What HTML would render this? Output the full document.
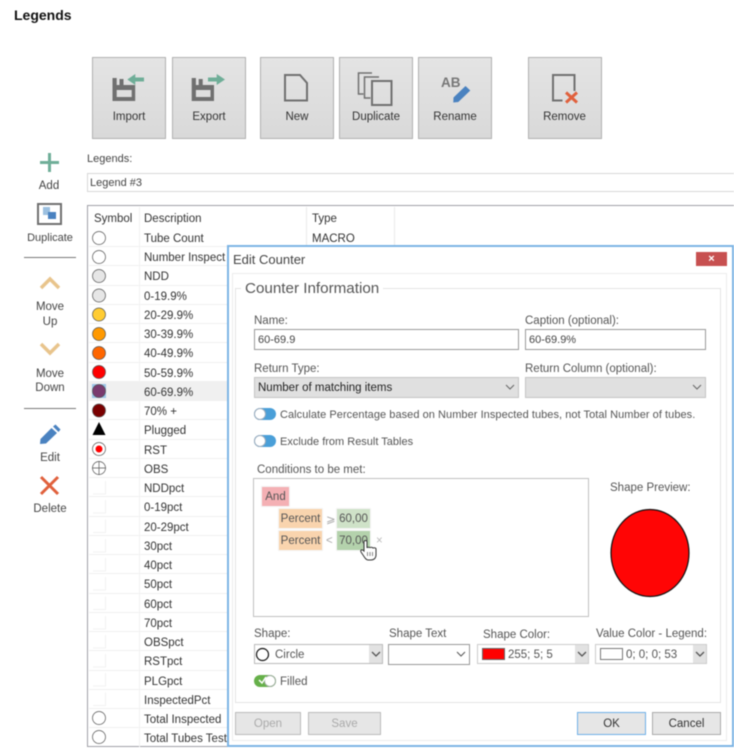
<!DOCTYPE html>
<html><head><meta charset="utf-8">
<style>
html,body{margin:0;padding:0;background:#fff}
#p{position:relative;width:734px;height:748px;overflow:hidden;background:#fff;font-family:"Liberation Sans",sans-serif;font-size:11.5px;color:#444;filter:blur(.4px)}
#p div,#p svg{position:absolute}
.t{white-space:nowrap;line-height:14px;height:14px}
.c{text-align:center;transform:translateX(-50%)}
.btn{top:57px;width:74px;height:82px;box-sizing:border-box;border:1px solid #b0b0b0;background:linear-gradient(#e4e4e4,#d9d9d9)}
.btn .l{position:absolute;left:0;right:0;top:52px;text-align:center;color:#333;font-size:11.5px;line-height:14px}
.btn svg{left:-1px;top:-1px}
.row{left:89px;width:138px;height:19px;border-bottom:1px solid #f0f0f0;box-sizing:border-box}
.lbl{color:#555}
.input{box-sizing:border-box;border:1.500px solid #9a9a9a;background:#fff;height:21px;line-height:20px;padding-left:3px;font-size:11px;color:#444}
.sel{box-sizing:border-box;background:#e0e0e0;border:1px solid #c4c4c4;height:21px;line-height:21px}
.chip{box-sizing:border-box;height:21px;line-height:21px;text-align:center;font-size:11.5px;color:#555;border:1px solid #f4f4f4}
.tog{width:22px;height:12px;border-radius:6px;background:#4a9fd8;box-sizing:border-box}
.tog i{position:absolute;left:0;top:0;width:12px;height:12px;border-radius:50%;background:#fff;border:1px solid #9ab;box-sizing:border-box}
.pb{box-sizing:border-box;border:1px solid #bbb;background:#e6e6e6;height:23px;line-height:22px;text-align:center;top:712px}
</style></head><body>
<div id="p">
<div class="t" style="left:14px;top:8px;font-size:14px;font-weight:bold;color:#111">Legends</div>

<div class="btn" style="left:92px"><div class="l">Import</div>
<svg width="74" height="82" viewBox="92 57 74 82"><path d="M112.500 78h4.200v7h2.800v-6h4v6h11.700v16h-22.700z M116.700 90v7h15v-7z" fill="#707070" fill-rule="evenodd"/><path d="M127.300 79.500l8-5.500v3.500h8.700v4h-8.700v3.500z" fill="#6fae98"/></svg></div>
<div class="btn" style="left:172px"><div class="l">Export</div>
<svg width="74" height="82" viewBox="172 57 74 82"><path d="M191.700 78h4.200v7h2.800v-6h4v6h11.300v16h-22.300z M195.900 90v7h14.600v-7z" fill="#707070" fill-rule="evenodd"/><path d="M208 77.500h8.700V74l8.300 5.500-8.300 5.500v-3.500H208z" fill="#6fae98"/></svg></div>
<div class="btn" style="left:260px"><div class="l">New</div>
<svg width="74" height="82" viewBox="260 57 74 82"><path d="M285 75h15l7 8v17.500h-22z" fill="none" stroke="#707070" stroke-width="2"/></svg></div>
<div class="btn" style="left:339px"><div class="l">Duplicate</div>
<svg width="74" height="82" viewBox="339 57 74 82"><path d="M372 73h-13.500v21h5" fill="none" stroke="#707070" stroke-width="1.500"/><path d="M379 77h-14.500v21h6" fill="none" stroke="#707070" stroke-width="1.500"/><rect x="372" y="81" width="19.500" height="24" fill="none" stroke="#707070" stroke-width="2"/></svg></div>
<div class="btn" style="left:418px"><div class="l">Rename</div>
<div class="t" style="left:22px;top:18px;font-weight:bold;font-size:13.5px;color:#777">AB</div>
<svg width="74" height="82" viewBox="418 57 74 82"><path d="M453.500 97.500L465.500 86l4.800 4.500-12 11.500-5 .5z" fill="#4a82c0"/></svg></div>
<div class="btn" style="left:527.500px"><div class="l">Remove</div>
<svg width="74" height="82" viewBox="527.500 57 74 82"><path d="M562 100.500h-9.500V75h21.500v16" fill="none" stroke="#707070" stroke-width="2"/><path d="M565.500 92.500l11 10M576.500 92.500l-11 10" stroke="#e0603c" stroke-width="3"/></svg></div>

<svg style="left:38px;top:151px" width="23" height="23" viewBox="0 0 23 23"><path d="M11.500 2v19M2 11.500h19" stroke="#6fae98" stroke-width="3"/></svg>
<div class="t c" style="left:49px;top:179px">Add</div>
<svg style="left:36px;top:202px" width="27" height="24" viewBox="0 0 27 24"><rect x="2" y="2" width="23" height="20" fill="#fff" stroke="#707070" stroke-width="2"/><rect x="7" y="5" width="7" height="8" fill="#9cc0e0"/><rect x="12" y="10" width="8" height="7" fill="#4a82c0"/></svg>
<div class="t c" style="left:50px;top:231px;font-size:11px">Duplicate</div>
<div style="left:24px;top:257px;width:52px;height:1px;background:#777"></div>
<svg style="left:38px;top:275px" width="24" height="16" viewBox="0 0 24 16"><path d="M3 13L12 4l9 9" fill="none" stroke="#e8c48c" stroke-width="3.500"/></svg>
<div class="t c" style="left:50px;top:300px">Move</div>
<div class="t c" style="left:50px;top:315px">Up</div>
<svg style="left:38px;top:341px" width="24" height="16" viewBox="0 0 24 16"><path d="M3 3l9 9 9-9" fill="none" stroke="#e8c48c" stroke-width="3.500"/></svg>
<div class="t c" style="left:50px;top:367px">Move</div>
<div class="t c" style="left:50px;top:381px">Down</div>
<div style="left:24px;top:408px;width:52px;height:1px;background:#777"></div>
<svg style="left:38px;top:423px" width="23" height="22" viewBox="0 0 23 22"><path d="M2.500 16L13.500 5l5.500 5L8 20.500l-6 .5z" fill="#4a82c0"/><path d="M15 3.500l2.500-2 5 5-2 2.500z" fill="#4a82c0"/></svg>
<div class="t c" style="left:50px;top:451px">Edit</div>
<svg style="left:38px;top:474px" width="23" height="23" viewBox="0 0 23 23"><path d="M3 3l17 17M20 3L3 20" stroke="#e0603c" stroke-width="3"/></svg>
<div class="t c" style="left:50px;top:502px">Delete</div>

<div class="t" style="left:87px;top:152px;font-size:11px">Legends:</div>
<div style="left:87px;top:173px;width:660px;height:19px;box-sizing:border-box;border:1.500px solid #d8d8d8;line-height:18px;padding-left:2px;font-size:11px">Legend #3</div>

<div style="left:87px;top:205px;width:660px;height:542px;box-sizing:border-box;border:1px solid #a0a0a8;border-right:0;border-width:1.500px 0 1.500px 1.500px"></div>
<div style="left:139px;top:207px;width:1px;height:540px;background:#f2f2f2"></div>
<div style="left:306px;top:207px;width:1px;height:38px;background:#eaeaea"></div>
<div style="left:394px;top:207px;width:1px;height:38px;background:#eaeaea"></div>
<div class="t" style="left:94px;top:212px;color:#333">Symbol</div>
<div class="t" style="left:144px;top:212px;color:#333">Description</div>
<div class="t" style="left:312px;top:212px;color:#333">Type</div>
<div class="t" style="left:312px;top:232px;color:#333">MACRO</div>

<div class="row" style="top:228px"></div><div class="row" style="top:247px"></div><div class="row" style="top:267px"></div><div class="row" style="top:286px"></div><div class="row" style="top:305px"></div><div class="row" style="top:324px"></div><div class="row" style="top:344px"></div><div class="row" style="top:363px"></div>
<div style="left:89px;top:382px;width:138px;height:19px;background:#f0f0f0"></div>
<div class="row" style="top:401px"></div><div class="row" style="top:421px"></div><div class="row" style="top:440px"></div><div class="row" style="top:459px"></div><div class="row" style="top:478px"></div><div class="row" style="top:498px"></div><div class="row" style="top:517px"></div><div class="row" style="top:536px"></div><div class="row" style="top:555px"></div><div class="row" style="top:575px"></div><div class="row" style="top:594px"></div><div class="row" style="top:613px"></div><div class="row" style="top:632px"></div><div class="row" style="top:652px"></div><div class="row" style="top:671px"></div><div class="row" style="top:690px"></div><div class="row" style="top:709px"></div>

<div class="t" style="left:144px;top:232px;color:#333">Tube Count</div>
<div class="t" style="left:144px;top:251px;color:#333">Number Inspect</div>
<div class="t" style="left:144px;top:270px;color:#333">NDD</div>
<div class="t" style="left:144px;top:290px;color:#333">0-19.9%</div>
<div class="t" style="left:144px;top:309px;color:#333">20-29.9%</div>
<div class="t" style="left:144px;top:328px;color:#333">30-39.9%</div>
<div class="t" style="left:144px;top:347px;color:#333">40-49.9%</div>
<div class="t" style="left:144px;top:367px;color:#333">50-59.9%</div>
<div class="t" style="left:144px;top:386px;color:#333">60-69.9%</div>
<div class="t" style="left:144px;top:405px;color:#333">70% +</div>
<div class="t" style="left:144px;top:424px;color:#333">Plugged</div>
<div class="t" style="left:144px;top:444px;color:#333">RST</div>
<div class="t" style="left:144px;top:463px;color:#333">OBS</div>
<div class="t" style="left:144px;top:482px;color:#333">NDDpct</div>
<div class="t" style="left:144px;top:501px;color:#333">0-19pct</div>
<div class="t" style="left:144px;top:521px;color:#333">20-29pct</div>
<div class="t" style="left:144px;top:540px;color:#333">30pct</div>
<div class="t" style="left:144px;top:559px;color:#333">40pct</div>
<div class="t" style="left:144px;top:578px;color:#333">50pct</div>
<div class="t" style="left:144px;top:598px;color:#333">60pct</div>
<div class="t" style="left:144px;top:617px;color:#333">70pct</div>
<div class="t" style="left:144px;top:636px;color:#333">OBSpct</div>
<div class="t" style="left:144px;top:655px;color:#333">RSTpct</div>
<div class="t" style="left:144px;top:675px;color:#333">PLGpct</div>
<div class="t" style="left:144px;top:694px;color:#333">InspectedPct</div>
<div class="t" style="left:144px;top:713px;color:#333">Total Inspected</div>
<div class="t" style="left:144px;top:732px;color:#333">Total Tubes Test</div>

<svg style="left:88px;top:228px" width="24" height="519" viewBox="0 0 24 519">
<g stroke="#555" stroke-width=".7">
<circle cx="11" cy="10" r="6.500" fill="#fff"/>
<circle cx="11" cy="29" r="6.500" fill="#fff"/>
<circle cx="11" cy="48" r="6.500" fill="#e6e6e6"/>
<circle cx="11" cy="67.500" r="6.500" fill="#e6e6e6"/>
<circle cx="11" cy="86.500" r="6.500" fill="#ffcc33"/>
<circle cx="11" cy="106" r="6.500" fill="#ff9900"/>
<circle cx="11" cy="125" r="6.500" fill="#ff6600"/>
<circle cx="11" cy="144" r="6.500" fill="#ff0000"/>
<rect x="4" y="156" width="14" height="14" fill="#9cc4e8" stroke="none"/>
<circle cx="11" cy="163" r="6.500" fill="#7a3a6e"/>
<circle cx="11" cy="182.500" r="6.500" fill="#7a0000"/>
<path d="M11 194l6.500 13h-13z" fill="#000" stroke="none"/>
<circle cx="11" cy="221" r="6.500" fill="#fff"/><circle cx="11" cy="221" r="3.500" fill="#f00" stroke="none"/>
<circle cx="11" cy="240" r="6.500" fill="#fff"/><path d="M11 233v14M4 240h14" fill="none"/>
<circle cx="11" cy="490" r="6.500" fill="#fff"/>
<circle cx="11" cy="509" r="6.500" fill="#fff"/>
</g>
<g fill="none" stroke="#f2f2f2" stroke-width="1">
<path d="M17.500 253v13H5"/><path d="M17.500 272v13H5"/><path d="M17.500 291.500v13H5"/><path d="M17.500 311v13H5"/><path d="M17.500 330v13H5"/><path d="M17.500 349v13H5"/><path d="M17.500 368.500v13H5"/><path d="M17.500 388v13H5"/><path d="M17.500 407v13H5"/><path d="M17.500 426v13H5"/><path d="M17.500 445v13H5"/><path d="M17.500 464.500v13H5"/>
</g></svg>

<div style="left:227px;top:245px;width:507px;height:502px;box-sizing:border-box;border:2px solid #7cb4e4;background:#fff"></div>
<div class="t" style="left:233px;top:253px;font-size:13px;color:#444">Edit Counter</div>
<div style="left:696px;top:252px;width:31px;height:14px;background:#c75050;color:#fff;text-align:center;font-size:11px;line-height:14px;font-weight:bold">×</div>
<div style="left:232px;top:273px;width:495px;height:468px;box-sizing:border-box;border:1px solid #ececec"></div>
<div style="left:235px;top:288px;width:486px;height:415px;box-sizing:border-box;border:1px solid #e4e4e4"></div>
<div class="t" style="left:241px;top:280px;height:18px;line-height:18px;font-size:15.200px;color:#555;background:#fff;padding:0 4px">Counter Information</div>

<div class="t lbl" style="left:254px;top:314px">Name:</div>
<div class="t lbl" style="left:525px;top:314px">Caption (optional):</div>
<div class="input" style="left:254px;top:329px;width:265px">60-69.9</div>
<div class="input" style="left:525px;top:329px;width:181px">60-69.9%</div>
<div class="t lbl" style="left:254px;top:362px">Return Type:</div>
<div class="t lbl" style="left:525px;top:362px">Return Column (optional):</div>
<div class="sel" style="left:254px;top:377px;width:265px;padding-left:3px;color:#222">Number of matching items</div>
<div class="sel" style="left:525px;top:377px;width:181px"></div>
<svg style="left:505px;top:384px" width="10" height="7" viewBox="0 0 10 7"><path d="M1 1l4 4 4-4" fill="none" stroke="#666" stroke-width="1"/></svg>
<svg style="left:692px;top:384px" width="10" height="7" viewBox="0 0 10 7"><path d="M1 1l4 4 4-4" fill="none" stroke="#666" stroke-width="1"/></svg>
<div class="tog" style="left:254px;top:408px"><i></i></div>
<div class="t lbl" style="left:280px;top:408px;font-size:11px;letter-spacing:.05px">Calculate Percentage based on Number Inspected tubes, not Total Number of tubes.</div>
<div class="tog" style="left:254px;top:435px"><i></i></div>
<div class="t lbl" style="left:280px;top:435px;font-size:11px">Exclude from Result Tables</div>

<div class="t lbl" style="left:257px;top:463px">Conditions to be met:</div>
<div style="left:253px;top:478px;width:336px;height:139px;box-sizing:border-box;border:1px solid #c0c0c0"></div>
<div class="chip" style="left:261px;top:486px;width:29px;background:#f4b0b4">And</div>
<div class="chip" style="left:278px;top:508px;width:45px;background:#f9d4ae">Percent</div>
<div class="t" style="left:326px;top:513px;color:#aaa">⩾</div>
<div class="chip" style="left:336px;top:508px;width:35px;background:#cfe2c8">60,00</div>
<div class="chip" style="left:278px;top:530px;width:45px;background:#f9d4ae">Percent</div>
<div class="t" style="left:326px;top:534px;color:#aaa">&lt;</div>
<div class="chip" style="left:336px;top:530px;width:35px;background:#b4d2ac">70,00</div>
<div class="t" style="left:376px;top:534px;color:#bbb">×</div>
<svg style="left:359px;top:539px" width="18" height="23" viewBox="0 0 18 23"><path d="M5 12V3c0-2 3-2 3 0v6c0-1 3-1 3 0 0-1 3-1 3 .5 0-1 3-1 3 .5v6c0 3-2 5-5 5H9c-2 0-3-2-5-5l-2-3c-1-2 1-3 3-1z" fill="#fff" stroke="#333" stroke-width="1"/><path d="M8.500 13v4M11 13v4M13.500 13v4" stroke="#555" stroke-width=".7"/></svg>

<div class="t lbl" style="left:610px;top:481px">Shape Preview:</div>
<svg style="left:608px;top:507px" width="84" height="92" viewBox="0 0 84 92"><ellipse cx="42" cy="46" rx="39" ry="43.500" fill="#ff0505" stroke="#111" stroke-width="1.200"/></svg>

<div class="t lbl" style="left:254px;top:627px">Shape:</div>
<div class="t lbl" style="left:389px;top:627px">Shape Text</div>
<div class="t lbl" style="left:483px;top:628px">Shape Color:</div>
<div class="t lbl" style="left:596px;top:627px">Value Color - Legend:</div>

<div style="left:254px;top:644px;width:129px;height:20px;box-sizing:border-box;border:1px solid #bbb"></div>
<div style="left:369px;top:645px;width:13px;height:18px;background:#e2e2e2"></div>
<svg style="left:255px;top:647px" width="15" height="15" viewBox="0 0 15 15"><circle cx="7.500" cy="7.500" r="6" fill="#fff" stroke="#111" stroke-width="1.200"/></svg>
<div class="t lbl" style="left:275px;top:648px">Circle</div>
<div style="left:388px;top:644px;width:82px;height:21px;box-sizing:border-box;border:1.500px solid #999"></div>
<div style="left:477px;top:644px;width:112px;height:20px;box-sizing:border-box;border:1px solid #ccc"></div>
<div style="left:575px;top:645px;width:13px;height:18px;background:#e2e2e2"></div>
<div style="left:482px;top:648px;width:23px;height:12px;background:#f00;border:1px solid #666;box-sizing:border-box"></div>
<div class="t lbl" style="left:508px;top:648px">255; 5; 5</div>
<div style="left:595px;top:644px;width:112px;height:20px;box-sizing:border-box;border:1px solid #ccc"></div>
<div style="left:693px;top:645px;width:13px;height:18px;background:#e2e2e2"></div>
<div style="left:600px;top:648px;width:23px;height:12px;background:#fff;border:1px solid #777;box-sizing:border-box"></div>
<div class="t lbl" style="left:626px;top:648px">0; 0; 0; 53</div>
<svg style="left:371px;top:651px" width="10" height="7" viewBox="0 0 10 7"><path d="M1 1l4 4 4-4" fill="none" stroke="#555" stroke-width="1.300"/></svg>
<svg style="left:456px;top:651px" width="10" height="7" viewBox="0 0 10 7"><path d="M1 1l4 4 4-4" fill="none" stroke="#555" stroke-width="1"/></svg>
<svg style="left:577px;top:651px" width="10" height="7" viewBox="0 0 10 7"><path d="M1 1l4 4 4-4" fill="none" stroke="#555" stroke-width="1.300"/></svg>
<svg style="left:695px;top:651px" width="10" height="7" viewBox="0 0 10 7"><path d="M1 1l4 4 4-4" fill="none" stroke="#555" stroke-width="1.300"/></svg>

<div class="tog" style="left:254px;top:675px;background:#66b04a"><i style="left:10px;border-color:#9a9"></i></div>
<svg style="left:258px;top:676px" width="9" height="9" viewBox="0 0 9 9"><path d="M1 4l3 3 4-6" fill="none" stroke="#fff" stroke-width="1.500"/></svg>
<div class="t lbl" style="left:280px;top:675px">Filled</div>

<div class="pb" style="left:235px;width:66px;color:#aaa">Open</div>
<div class="pb" style="left:308px;width:73px;color:#aaa">Save</div>
<div class="pb" style="left:577px;width:69px;color:#333;border:1.500px solid #6fb0e8">OK</div>
<div class="pb" style="left:652px;width:69px;color:#333;border-color:#aaa">Cancel</div>
</div>
</body></html>
